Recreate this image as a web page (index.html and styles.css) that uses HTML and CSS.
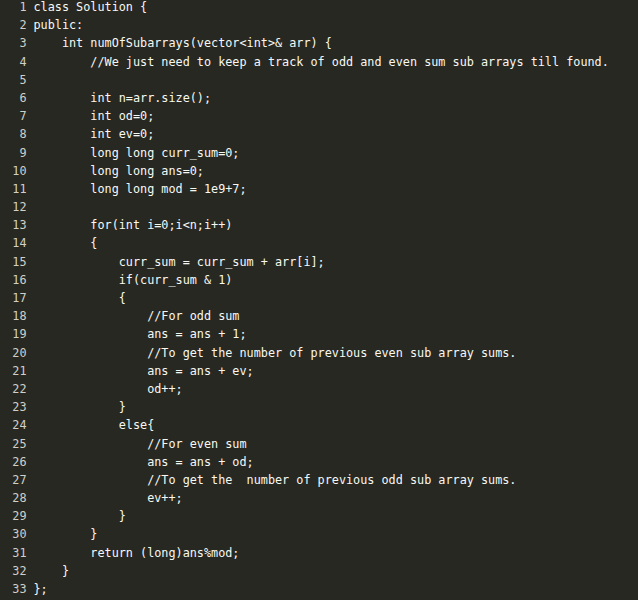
FILE: index.html
```html
<!DOCTYPE html>
<html>
<head>
<meta charset="utf-8">
<link rel="stylesheet" href="styles.css">
</head>
<body>
<div class="editor">
<div class="gutter"><div>1</div><div>2</div><div>3</div><div>4</div><div>5</div><div>6</div><div>7</div><div>8</div><div>9</div><div>10</div><div>11</div><div>12</div><div>13</div><div>14</div><div>15</div><div>16</div><div>17</div><div>18</div><div>19</div><div>20</div><div>21</div><div>22</div><div>23</div><div>24</div><div>25</div><div>26</div><div>27</div><div>28</div><div>29</div><div>30</div><div>31</div><div>32</div><div>33</div></div>
<pre class="code">class Solution {
public:
    int numOfSubarrays(vector&lt;int&gt;&amp; arr) {
        //We just need to keep a track of odd and even sum sub arrays till found.

        int n=arr.size();
        int od=0;
        int ev=0;
        long long curr_sum=0;
        long long ans=0;
        long long mod = 1e9+7;

        for(int i=0;i&lt;n;i++)
        {
            curr_sum = curr_sum + arr[i];
            if(curr_sum &amp; 1)
            {
                //For odd sum
                ans = ans + 1;
                //To get the number of previous even sub array sums.
                ans = ans + ev;
                od++;
            }
            else{
                //For even sum
                ans = ans + od;
                //To get the  number of previous odd sub array sums.
                ev++;
            }
        }
        return (long)ans%mod;
    }
};</pre>
</div>
</body>
</html>
```
FILE: styles.css
```css
html, body {
  margin: 0;
  padding: 0;
  background: #272822;
}
body {
  width: 638px;
  height: 600px;
  overflow: hidden;
}
.editor {
  display: flex;
  margin-top: -2px;
  font-family: "DejaVu Sans Mono", "Liberation Mono", monospace;
  font-size: 11.8px;
  line-height: 18.19px;
  color: #f8f8f2;
}
.gutter {
  width: 26.5px;
  text-align: right;
  color: #d0d0c8;
  padding-right: 7px;
}
.code {
  margin: 0;
  font: inherit;
  white-space: pre;
}
```
